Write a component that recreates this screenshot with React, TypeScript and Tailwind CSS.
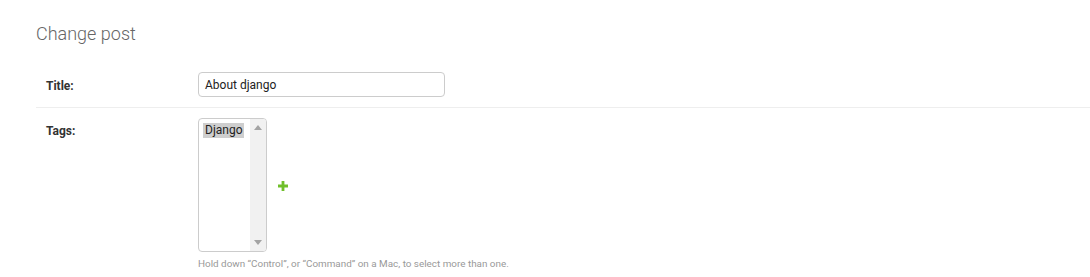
import React from "react";

export default function App() {
  return (
    <div className="w-[1090px] h-[277px] bg-white overflow-hidden" style={{ fontFamily: "Roboto, 'Liberation Sans', sans-serif" }}>
      <div className="pl-[36px] pt-[23px]">
        <h1 className="text-[18px] leading-[22px] font-light text-[#666] m-0">Change post</h1>
        <div className="mt-[17px]">
          <div className="flex border-b border-[#eee] pl-[10px] pt-[10px] pb-[10px]">
            <label className="w-[152px] pt-[7px] text-[12px] leading-[15px] font-bold text-[#333]">Title:</label>
            <div className="w-[247px] h-[25px] border border-[#ccc] rounded-[4px] px-[6px] flex items-center text-[12px] text-[#222]">About django</div>
          </div>
          <div className="flex border-b border-[#eee] pl-[10px] pt-[10px] pb-[7px]">
            <label className="w-[152px] pt-[6px] text-[12px] leading-[15px] font-bold text-[#333]">Tags:</label>
            <div className="flex flex-col">
              <div className="flex items-center">
                <div className="w-[69px] h-[134px] border border-[#ccc] rounded-[4px] flex overflow-hidden">
                  <div className="flex-1 pl-[4px] pt-[4px]">
                    <div className="bg-[#cecece] text-[12px] leading-[15px] text-[#222] px-[2px] w-fit">Django</div>
                  </div>
                  <div className="w-[16px] bg-[#f1f1f1] flex flex-col justify-between items-center py-[6px]">
                    <svg width="8" height="5" viewBox="0 0 8 5"><path d="M0 5 L4 0 L8 5 Z" fill="#a3a3a3" /></svg>
                    <svg width="8" height="5" viewBox="0 0 8 5"><path d="M0 0 L4 5 L8 0 Z" fill="#a3a3a3" /></svg>
                  </div>
                </div>
                <svg className="ml-[11px] mt-[2px]" width="10" height="10" viewBox="0 0 10 10">
                  <path d="M3.6 0 H6.4 V3.6 H10 V6.4 H6.4 V10 H3.6 V6.4 H0 V3.6 H3.6 Z" fill="#70bf2b" />
                </svg>
              </div>
              <div className="text-[9.9px] leading-[13px] text-[#999] mt-[5px]">Hold down “Control”, or “Command” on a Mac, to select more than one.</div>
            </div>
          </div>
        </div>
      </div>
    </div>
  );
}
